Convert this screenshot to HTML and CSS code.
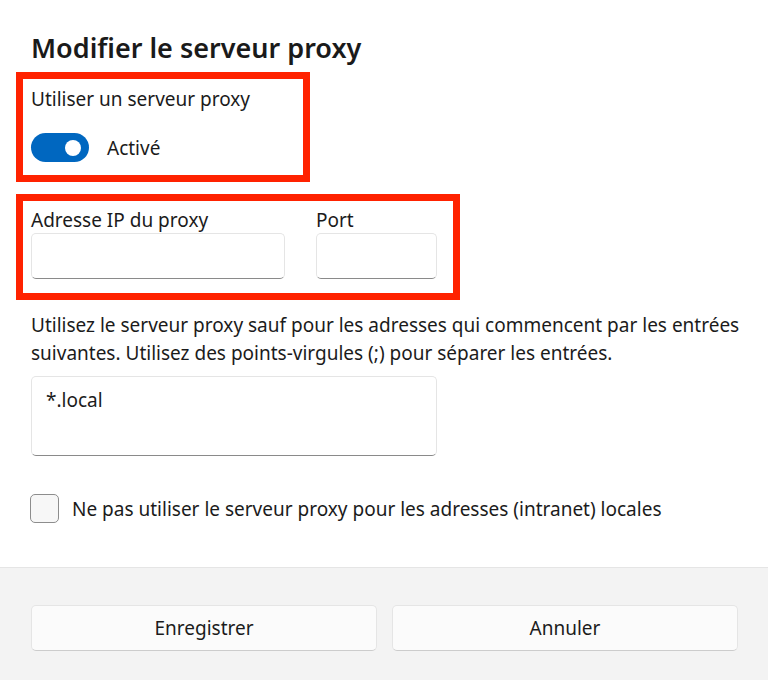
FILE: index.html
```html
<!DOCTYPE html>
<html lang="fr">
<head>
  <meta charset="UTF-8" />
  <title>Modifier le serveur proxy</title>
  <meta name="viewport" content="width=device-width, initial-scale=1.0">
  <link rel="stylesheet" href="styles.css">
</head>
<body>

  <form class="dialog" onsubmit="event.preventDefault()">
    <div class="content">
      <h2>Modifier le serveur proxy</h2>

      <!-- Interrupteur du proxy -->
      <div class="section highlight toggle-section">
        <div class="label">Utiliser un serveur proxy</div>
        <label class="toggle-row">
          <span class="toggle on"><span class="knob"></span></span>
          <span>Activé</span>
        </label>
      </div>

      <!-- Adresse et port -->
      <div class="section highlight fields">
        <div class="field address">
          <label for="adresse">Adresse IP du proxy</label>
          <input type="text" id="adresse" name="adresse">
        </div>
        <div class="field port">
          <label for="port">Port</label>
          <input type="text" id="port" name="port">
        </div>
      </div>

      <p class="hint">Utilisez le serveur proxy sauf pour les adresses qui commencent par les entrées suivantes. Utilisez des points-virgules (;) pour séparer les entrées.</p>

      <textarea name="exceptions">*.local</textarea>

      <label class="check-row">
        <span class="checkbox"></span>
        <span>Ne pas utiliser le serveur proxy pour les adresses (intranet) locales</span>
      </label>
    </div>

    <div class="footer">
      <button type="submit">Enregistrer</button>
      <button type="button">Annuler</button>
    </div>
  </form>

</body>
</html>
```

FILE: styles.css
```css
body {
  margin: 0;
  background: #ffffff;
  color: #1b1b1b;
  font-family: "Noto Sans", "Open Sans", sans-serif;
  font-size: 19px;
}

.dialog {
  width: 768px;
  height: 680px;
  display: flex;
  flex-direction: column;
}

.content {
  flex: 1;
  padding: 0 31px;
}

h2 {
  margin: 0;
  padding-top: 30px;
  font-size: 27px;
  line-height: 36px;
  font-weight: 600;
  color: #1a1a1a;
}

.section {
  display: flex;
}

/* cadre rouge autour des réglages importants */
.highlight {
  outline: 7px solid #ff2200;
}

.toggle-section {
  flex-direction: column;
  width: 280px;
  height: 96px;
  margin: 13px 0 0 -8px;
  padding: 8px 0 0 8px;
  box-sizing: border-box;
}

.label {
  line-height: 24px;
}

.toggle-row {
  display: flex;
  align-items: center;
  gap: 18px;
  margin-top: 22px;
}

.toggle {
  width: 58px;
  height: 29px;
  border-radius: 15px;
  background: #0067c0;
  display: flex;
  align-items: center;
  justify-content: flex-end;
  padding: 0 8px;
  box-sizing: border-box;
}

.knob {
  width: 16px;
  height: 16px;
  border-radius: 50%;
  background: #ffffff;
}

.fields {
  width: 430px;
  height: 92px;
  margin: 26px 0 0 -8px;
  padding: 6px 0 0 8px;
  box-sizing: border-box;
  gap: 31px;
}

.field {
  display: flex;
  flex-direction: column;
}

.field label {
  line-height: 26px;
}

input, textarea {
  font-family: inherit;
  font-size: 19px;
  color: #1b1b1b;
  background: #ffffff;
  border: 1px solid #e5e5e5;
  border-bottom-color: #8a8a8a;
  border-radius: 5px;
  box-sizing: border-box;
  outline: none;
}

input {
  height: 46px;
  padding: 0 14px;
}

.address input {
  width: 254px;
}

.port input {
  width: 121px;
}

.hint {
  margin: 18px 0 0;
  line-height: 28px;
  width: 710px;
}

textarea {
  display: block;
  width: 406px;
  height: 80px;
  margin-top: 9px;
  padding: 10px 14px;
  resize: none;
  line-height: 26px;
}

.check-row {
  display: flex;
  align-items: center;
  gap: 13px;
  margin: 38px 0 0 -1px;
}

.checkbox {
  width: 29px;
  height: 29px;
  border: 1px solid #8d8d8d;
  border-radius: 5px;
  background: #f7f7f7;
  box-sizing: border-box;
}

.footer {
  height: 113px;
  background: #f3f3f3;
  border-top: 1px solid #e5e5e5;
  display: grid;
  grid-template-columns: 1fr 1fr;
  gap: 15px;
  padding: 37px 30px 0 31px;
  box-sizing: border-box;
  align-items: start;
}

button {
  height: 46px;
  background: #fbfbfb;
  border: 1px solid #e5e5e5;
  border-bottom-color: #cccccc;
  border-radius: 5px;
  font-family: inherit;
  font-size: 19px;
  color: #1b1b1b;
  cursor: pointer;
}

button:hover {
  background: #f6f6f6;
}
```
